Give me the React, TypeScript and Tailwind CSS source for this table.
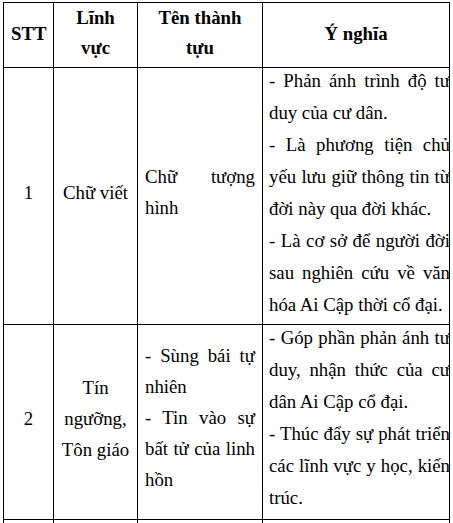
import type { ReactNode } from 'react'

type Row = {
  stt: string
  field: ReactNode
  name: ReactNode
  meaning: string[]
  height: string
}

const ROWS: Row[] = [
  {
    stt: '1',
    field: 'Chữ viết',
    name: <p className="leading-[31px]">Chữ tượng hình</p>,
    meaning: [
      '- Phản ánh trình độ tư duy của cư dân.',
      '- Là phương tiện chủ yếu lưu giữ thông tin từ đời này qua đời khác.',
      '- Là cơ sở để người đời sau nghiên cứu về văn hóa Ai Cập thời cổ đại.',
    ],
    height: 'h-[257px]',
  },
  {
    stt: '2',
    field: (
      <span className="leading-[29px]">
        Tín
        <br />
        ngưỡng,
        <br />
        Tôn giáo
      </span>
    ),
    name: (
      <>
        <p>- Sùng bái tự nhiên</p>
        <p>- Tin vào sự bất tử của linh hồn</p>
      </>
    ),
    meaning: [
      '- Góp phần phản ánh tư duy, nhận thức của cư dân Ai Cập cổ đại.',
      '- Thúc đẩy sự phát triển các lĩnh vực y học, kiến trúc.',
    ],
    height: 'h-[195px]',
  },
  {
    stt: '3',
    field: 'Kiến trúc',
    name: <p>Kim tự tháp</p>,
    meaning: ['- Thể hiện trình độ kĩ thuật cao của cư dân Ai Cập cổ đại.'],
    height: 'h-[160px]',
  },
]

const cell = 'border border-black px-[7px] py-0'
const mid = `${cell} pb-[7px] align-middle`
const head = `${cell} pb-[4px] align-middle text-center`

export default function App() {
  return (
    <div className="h-[523px] w-[453px] overflow-hidden bg-white">
      <table
        className="ml-[3px] mt-[2px] table-fixed border-collapse text-[18.8px] leading-[31px] text-black"
        style={{ fontFamily: '"Liberation Serif", "Times New Roman", serif', width: 446 }}
      >
        <colgroup>
          <col className="w-[50px]" />
          <col className="w-[84px]" />
          <col className="w-[125px]" />
          <col className="w-[187px]" />
        </colgroup>
        <thead>
          <tr className="h-[65px] font-bold">
            <th className={head}>STT</th>
            <th className={`${head} leading-[30px]`}>
              Lĩnh
              <br />
              vực
            </th>
            <th className={`${head} leading-[30px]`}>
              Tên thành
              <br />
              tựu
            </th>
            <th className={head}>Ý nghĩa</th>
          </tr>
        </thead>
        <tbody>
          {ROWS.map((row) => (
            <tr key={row.stt} className={row.height}>
              <td className={`${mid} text-center`}>{row.stt}</td>
              <td className={`${mid} text-center`}>{row.field}</td>
              <td className={`${cell} pb-[9px] text-justify align-middle`}>{row.name}</td>
              {/* text runs up to the right border, as in the scan */}
              <td className={`${cell} overflow-hidden pl-[6px] pr-0 text-justify align-top`}>
                <div className="-mt-[3px] w-[181px] leading-[32px]">
                  {row.meaning.map((line) => (
                    <p key={line}>{line}</p>
                  ))}
                </div>
              </td>
            </tr>
          ))}
        </tbody>
      </table>
    </div>
  )
}
